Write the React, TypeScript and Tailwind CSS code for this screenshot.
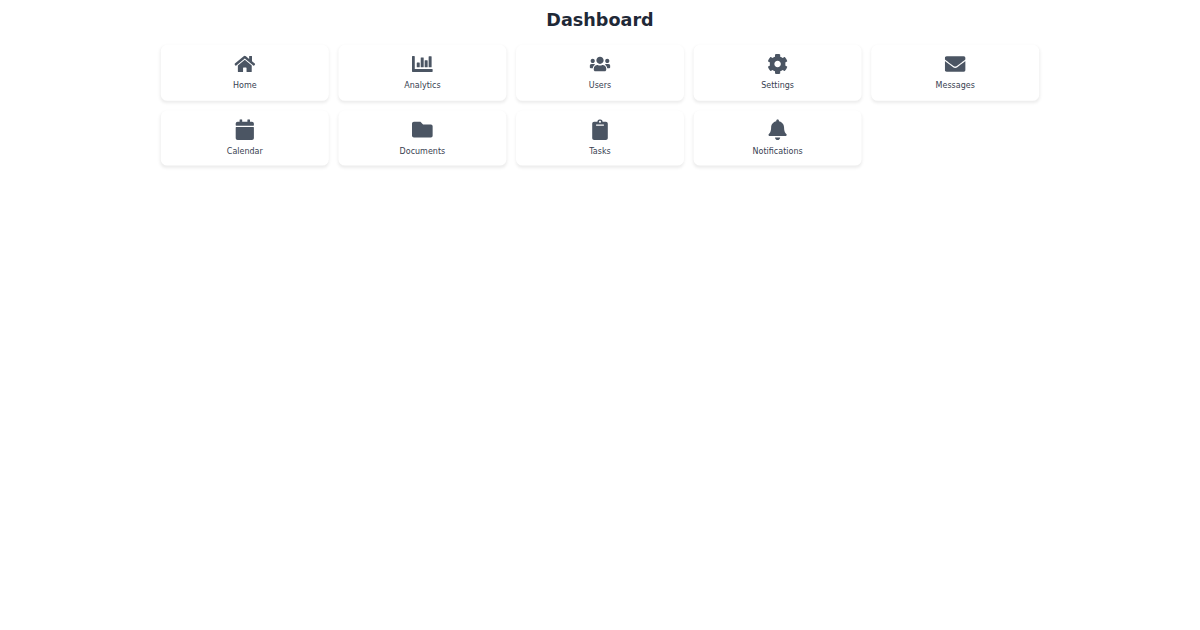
import { FaHome, FaUsers, FaCog, FaEnvelope, FaFolder, FaClipboard, FaBell, FaCalendar } from "react-icons/fa";
import type { IconType } from "react-icons";

function AnalyticsIcon({ className }: { className?: string }) {
    return (
        <svg viewBox="0.7 0.7 21 21" width="1em" height="1em" fill="currentColor" className={className}>
            <path d="M1.3 3.2h1.6a.6.6 0 0 1 .6.6v12.4h17.6a.6.6 0 0 1 .6.6v1.8a.6.6 0 0 1-.6.6H1.3a.6.6 0 0 1-.6-.6V3.8a.6.6 0 0 1 .6-.6z" />
            <rect x="5.5" y="9.8" width="3" height="4.8" rx="0.4" />
            <rect x="9.5" y="4.6" width="3" height="10" rx="0.4" />
            <rect x="13.5" y="7.4" width="3" height="7.2" rx="0.4" />
            <rect x="17.5" y="3.4" width="3" height="11.2" rx="0.4" />
        </svg>
    )
}

const items: { label: string; icon: IconType | typeof AnalyticsIcon }[] = [
    { label: "Home", icon: FaHome },
    { label: "Analytics", icon: AnalyticsIcon },
    { label: "Users", icon: FaUsers },
    { label: "Settings", icon: FaCog },
    { label: "Messages", icon: FaEnvelope },
    { label: "Calendar", icon: FaCalendar },
    { label: "Documents", icon: FaFolder },
    { label: "Tasks", icon: FaClipboard },
    { label: "Notifications", icon: FaBell },
];

export default function App() {
    return (
        <div className="min-h-[630px] bg-white font-['DejaVu_Sans',sans-serif]">
            {/* page is drawn at 80% */}
            <div className="mx-auto w-[1098px] scale-80 origin-top">
                <h1 className="pt-[13px] h-[56px] text-center text-[22px] leading-[24px] font-bold text-[#1f2937]">Dashboard</h1>
                <div className="grid grid-cols-5 gap-3">
                    {items.map(({ label, icon: Icon }) => (
                        <div key={label} className="h-[69.5px] flex flex-col items-center pt-[11px] bg-white rounded-lg shadow-[0_2px_4px_rgba(0,0,0,0.08)]">
                            <Icon className="text-[26px] text-[#4b5563]" />
                            <span className="mt-[6px] text-[10px] leading-[15px] text-[#374151]">{label}</span>
                        </div>
                    ))}
                </div>
            </div>
        </div>
    )
}
